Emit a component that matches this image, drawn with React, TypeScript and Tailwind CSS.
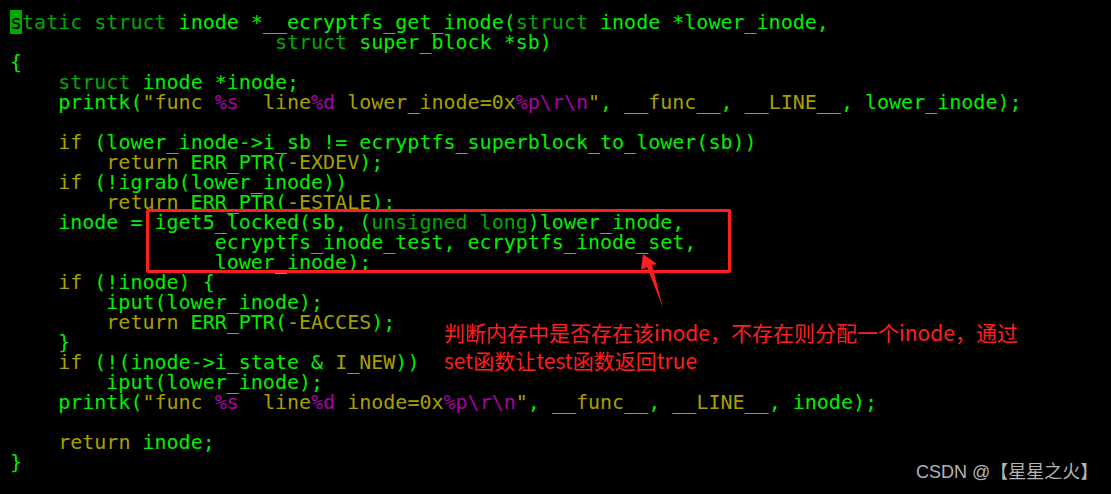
import React from "react";

type Tok = [string, string];

const G = "text-[#00f000]";
const D = "text-[#00a800]";
const Y = "text-[#a8a000]";
const M = "text-[#a800a8]";

const lines: Tok[][] = [
  [
    [D, "tatic struct"],
    [G, " inode *__ecryptfs_get_inode("],
    [D, "struct"],
    [G, " inode *lower_inode,"],
  ],
  [
    [G, "                      "],
    [D, "struct"],
    [G, " super_block *sb)"],
  ],
  [[G, "{"]],
  [
    [G, "    "],
    [D, "struct"],
    [G, " inode *inode;"],
  ],
  [
    [G, "    printk("],
    [Y, '"func '],
    [M, "%s"],
    [Y, "  line"],
    [M, "%d"],
    [Y, " lower_inode=0x"],
    [M, "%p\\r\\n"],
    [Y, '"'],
    [G, ", "],
    [Y, "__func__"],
    [G, ", "],
    [Y, "__LINE__"],
    [G, ", lower_inode);"],
  ],
  [],
  [
    [G, "    "],
    [Y, "if"],
    [G, " (lower_inode->i_sb != ecryptfs_superblock_to_lower(sb))"],
  ],
  [
    [G, "        "],
    [Y, "return"],
    [G, " ERR_PTR("],
    [Y, "-EXDEV"],
    [G, ");"],
  ],
  [
    [G, "    "],
    [Y, "if"],
    [G, " (!igrab(lower_inode))"],
  ],
  [
    [G, "        "],
    [Y, "return"],
    [G, " ERR_PTR("],
    [Y, "-ESTALE"],
    [G, ");"],
  ],
  [
    [G, "    inode = iget5_locked(sb, ("],
    [D, "unsigned long"],
    [G, ")lower_inode,"],
  ],
  [[G, "                 ecryptfs_inode_test, ecryptfs_inode_set,"]],
  [[G, "                 lower_inode);"]],
  [
    [G, "    "],
    [Y, "if"],
    [G, " (!inode) {"],
  ],
  [[G, "        iput(lower_inode);"]],
  [
    [G, "        "],
    [Y, "return"],
    [G, " ERR_PTR("],
    [Y, "-EACCES"],
    [G, ");"],
  ],
  [[G, "    }"]],
  [
    [G, "    "],
    [Y, "if"],
    [G, " (!(inode->i_state & "],
    [Y, "I_NEW"],
    [G, "))"],
  ],
  [[G, "        iput(lower_inode);"]],
  [
    [G, "    printk("],
    [Y, '"func '],
    [M, "%s"],
    [Y, "  line"],
    [M, "%d"],
    [Y, " inode=0x"],
    [M, "%p\\r\\n"],
    [Y, '"'],
    [G, ", "],
    [Y, "__func__"],
    [G, ", "],
    [Y, "__LINE__"],
    [G, ", inode);"],
  ],
  [],
  [
    [G, "    "],
    [Y, "return"],
    [G, " inode;"],
  ],
  [[G, "}"]],
];

export default function App() {
  return (
    <div className="relative w-[1111px] h-[494px] bg-black overflow-hidden">
      <div
        className="flex flex-col pt-[12px] pl-[10px] text-[20px] leading-[20px]"
        style={{ fontFamily: '"DejaVu Sans Mono", "Liberation Mono", monospace' }}
      >
        {lines.map((toks, i) => (
          <div key={i} className="h-[20px] whitespace-pre">
            {i === 0 && <span className="bg-[#00a800] text-black">s</span>}
            {toks.map(([c, t], j) => (
              <span key={j} className={c}>
                {t}
              </span>
            ))}
          </div>
        ))}
      </div>

      {/* red highlight box */}
      <div className="absolute left-[146px] top-[209px] w-[585px] h-[64px] border-[3px] border-[#ff1e1e] rounded-[2px]" />

      {/* arrow */}
      <svg className="absolute left-0 top-0" width="1111" height="494" viewBox="0 0 1111 494">
        <polygon
          points="643,254 657,264 652,265 663,308 647,267 641,270"
          fill="#ff1e1e"
        />
      </svg>

      {/* annotation */}
      <div
        className="absolute left-[444px] top-[318px] text-[21px] leading-[28px] text-[#ff1e1e] whitespace-nowrap"
        style={{ fontFamily: '"Noto Sans CJK SC", "Noto Sans", sans-serif' }}
      >
        <div>判断内存中是否存在该inode，不存在则分配一个inode，通过</div>
        <div>set函数让test函数返回true</div>
      </div>

      {/* watermark */}
      <div
        className="absolute left-[916px] top-[461px] text-[18px] leading-[22px] text-[#b4b4b4] whitespace-nowrap"
        style={{ fontFamily: '"Liberation Sans", "Noto Sans CJK SC", sans-serif' }}
      >
        CSDN @【星星之火】
      </div>
    </div>
  );
}
